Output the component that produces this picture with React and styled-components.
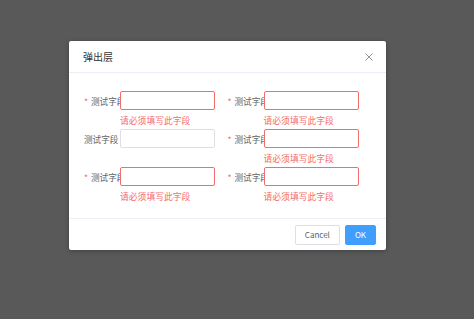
import styled, { createGlobalStyle } from "styled-components";

const GlobalStyle = createGlobalStyle`
  html, body {
    margin: 0;
    padding: 0;
    background: #595959;
  }
  body {
    font-family: "Noto Sans CJK SC", "Noto Sans", sans-serif;
  }
`;

const Overlay = styled.div`
  width: 474px;
  height: 319px;
  box-sizing: border-box;
  padding: 41px 0 0 69px;
  background: #595959;
`;

const Dialog = styled.div`
  width: 317px;
  background: #fff;
  border-radius: 2px;
  box-shadow: 0 1px 4px rgba(0, 0, 0, 0.3);
`;

const Header = styled.div`
  height: 32px;
  box-sizing: border-box;
  display: flex;
  align-items: center;
  justify-content: space-between;
  padding: 0 13px 0 14px;
  border-bottom: 1px solid #ebeef5;
`;

const Title = styled.span`
  font-size: 10px;
  color: #333;
`;

const Close = styled.button`
  border: 0;
  background: none;
  padding: 0;
  width: 8px;
  height: 8px;
  display: flex;
  cursor: pointer;
`;

const Body = styled.div`
  padding: 18px 15px 13px 15px;
  display: grid;
  grid-template-columns: 1fr 1fr;
`;

const Item = styled.div`
  display: flex;
  flex-direction: column;
`;

const Row = styled.div`
  display: flex;
  align-items: center;
  height: 19px;
`;

const Label = styled.label`
  width: 36px;
  flex: none;
  box-sizing: border-box;
  padding-right: 2px;
  text-align: right;
  white-space: nowrap;
  font-size: 8.6px;
  color: #606266;
  overflow: visible;
`;

const Star = styled.span`
  color: #f56c6c;
  margin-right: 3px;
`;

const Input = styled.input`
  position: relative;
  width: 95px;
  height: 19px;
  box-sizing: border-box;
  margin: 0;
  padding: 0 4px;
  border: 1px solid ${(p) => (p.$error ? "#f56c6c" : "#dcdfe6")};
  border-radius: 2px;
  background: #fff;
  outline: none;
  font-size: 8.5px;
`;

const Error = styled.div`
  height: 19px;
  box-sizing: border-box;
  padding: 6px 0 0 36px;
  font-size: 8.8px;
  line-height: 10px;
  color: #f56c6c;
`;

const Footer = styled.div`
  height: 32px;
  box-sizing: border-box;
  display: flex;
  align-items: center;
  justify-content: flex-end;
  gap: 5px;
  padding: 0 10px 0 0;
  border-top: 1px solid #ebeef5;
`;

const Button = styled.button`
  height: 20px;
  box-sizing: border-box;
  padding: 0 9px;
  border-radius: 2px;
  font-family: inherit;
  font-size: 8px;
  border: 1px solid ${(p) => (p.$primary ? "#409eff" : "#dcdfe6")};
  background: ${(p) => (p.$primary ? "#409eff" : "#fff")};
  color: ${(p) => (p.$primary ? "#fff" : "#606266")};
`;

const fields = [
  { required: true, error: true },
  { required: true, error: true },
  { required: false, error: false },
  { required: true, error: true },
  { required: true, error: true },
  { required: true, error: true },
];

const Field = ({ required, error }) => (
  <Item>
    <Row>
      <Label>
        {required && <Star>*</Star>}
        测试字段
      </Label>
      <Input $error={error} />
    </Row>
    <Error>{error ? "请必须填写此字段" : ""}</Error>
  </Item>
);

const App = () => (
  <>
    <GlobalStyle />
    <Overlay>
      <Dialog>
        <Header>
          <Title>弹出层</Title>
          <Close aria-label="close">
            <svg width="8" height="8" viewBox="0 0 8 8">
              <path d="M0.5 0.5L7.5 7.5M7.5 0.5L0.5 7.5" stroke="#909399" strokeWidth="1" />
            </svg>
          </Close>
        </Header>
        <Body>
          {fields.map((f, i) => (
            <Field key={i} {...f} />
          ))}
        </Body>
        <Footer>
          <Button>Cancel</Button>
          <Button $primary>OK</Button>
        </Footer>
      </Dialog>
    </Overlay>
  </>
);

export default App;
